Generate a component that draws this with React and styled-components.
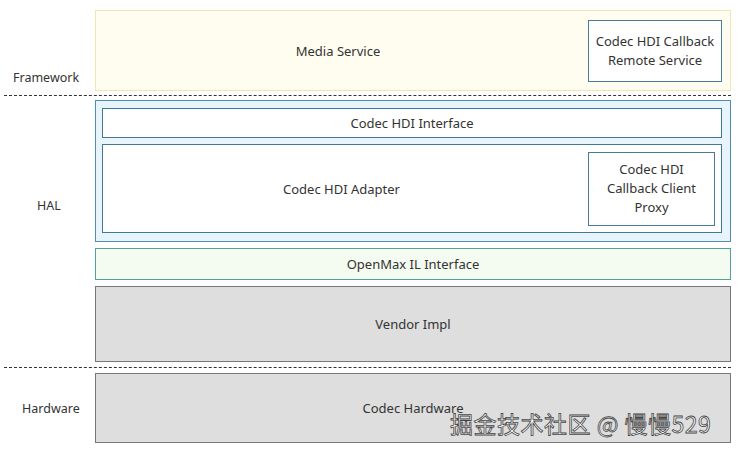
import React from "react";
import styled, { createGlobalStyle } from "styled-components";

const Global = createGlobalStyle`
  body { margin: 0; background: #fff; font-family: "Noto Sans", "Open Sans", sans-serif; color: #333; }
`;
const Page = styled.div`
  position: relative; width: 745px; height: 452px; box-sizing: border-box;
  padding: 10px 14px 0 4px; display: flex; flex-direction: column;
`;
const Row = styled.div`display: flex; margin-top: ${p => p.$mt || 0}px;`;
const Label = styled.div`
  width: 91px; flex: none; font-size: 12.5px; padding-left: ${p => p.$pl || 0}px;
  align-self: flex-end; padding-bottom: ${p => p.$pb || 0}px; box-sizing: border-box;
`;
const Box = styled.div`
  flex: 1; box-sizing: border-box; height: ${p => p.$h}px; background: ${p => p.$bg};
  border: 1px solid ${p => p.$bd}; display: flex; align-items: center;
  padding: ${p => p.$pad || "0"}; gap: 8px; font-size: 13px;
`;
const Group = styled.div`
  flex: 1; box-sizing: border-box; height: ${p => p.$h}px; background: #e8f4fb;
  border: 1px solid #4d8db2; padding: 7px 8px 8px 6px;
  display: flex; flex-direction: column; gap: 6px;
`;
const Center = styled.div`flex: 1; text-align: center;`;
const Inner = styled.div`
  box-sizing: border-box; width: ${p => p.$w}px; height: ${p => p.$h}px; background: #fff;
  border: 1px solid #4a7a98; display: flex; align-items: center; justify-content: center;
  text-align: center; line-height: 19px; font-size: 13px;
`;
const Dash = styled.div`height: 0; border-top: 1.5px dashed #333; margin: ${p => p.$m};`;
const Mark = styled.div`
  position: absolute; left: 450px; top: 406px; font-size: 23px; color: #fff;
  font-family: "Noto Sans CJK SC", sans-serif; letter-spacing: 0.5px;
  -webkit-text-stroke: 0.8px #444;
`;

export default function App() {
  return (
    <Page>
      <Global />
      <Row>
        <Label $pl={9} $pb={5}>Framework</Label>
        <Box $h={81} $bg="#fffdf0" $bd="#f1e6b3" $pad="0 8px 0 0">
          <Center>Media Service</Center>
          <Inner $w={134} $h={62}>Codec HDI Callback<br />Remote Service</Inner>
        </Box>
      </Row>
      <Dash $m="4px 0 4px 0" />
      <Row>
        <Label $pl={33} $pb={28}>HAL</Label>
        <Group $h={142}>
          <Box $h={30} $bg="#fff" $bd="#3f7897" style={{flex:"none"}}><Center>Codec HDI Interface</Center></Box>
          <Box $h={89} $bg="#fff" $bd="#3f7897" $pad="0 6px 0 0" style={{flex:"none"}}>
            <Center>Codec HDI Adapter</Center>
            <Inner $w={127} $h={74}>Codec HDI<br />Callback Client<br />Proxy</Inner>
          </Box>
        </Group>
      </Row>
      <Row $mt={6}>
        <Label />
        <Box $h={32} $bg="#f4fbf1" $bd="#4fa397"><Center>OpenMax IL Interface</Center></Box>
      </Row>
      <Row $mt={6}>
        <Label />
        <Box $h={76} $bg="#dedede" $bd="#777"><Center>Vendor Impl</Center></Box>
      </Row>
      <Dash $m="5px 0 5px 0" />
      <Row>
        <Label $pl={18} $pb={26}>Hardware</Label>
        <Box $h={70} $bg="#dedede" $bd="#777"><Center>Codec Hardware</Center></Box>
      </Row>
      <Mark>掘金技术社区 @ 慢慢529</Mark>
    </Page>
  );
}
